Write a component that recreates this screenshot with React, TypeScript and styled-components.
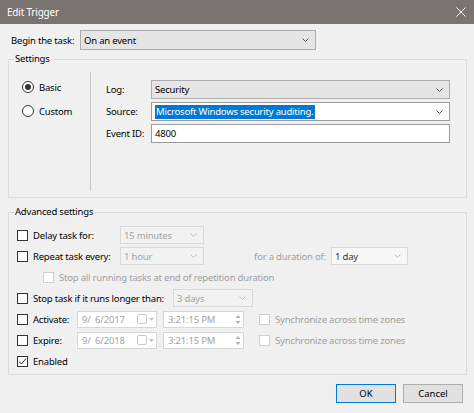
import React from "react";
import styled, { createGlobalStyle } from "styled-components";

const Global = createGlobalStyle`
  html, body { margin: 0; padding: 0; background: #f0f0f0; }
  body { font-family: "Noto Sans", "Liberation Sans", sans-serif; font-size: 9.5px; letter-spacing: -0.2px; color: #000; }
  * { box-sizing: border-box; }
`;

const Window = styled.div`
  width: 474px;
  height: 413px;
  background: #f0f0f0;
  display: flex;
  flex-direction: column;
  overflow: hidden;
`;

const TitleBar = styled.div`
  height: 24px;
  flex: none;
  background: #797371;
  color: #fff;
  display: flex;
  align-items: center;
  justify-content: space-between;
  padding: 0 8px 0 7px;
  font-size: 10px;
`;

const Content = styled.div`
  padding: 6px 8px 0 8px;
  display: flex;
  flex-direction: column;
`;

const Row = styled.div<{ $h?: number }>`
  display: flex;
  align-items: center;
  height: ${(p) => p.$h ?? 18}px;
`;

const FieldLabel = styled.span<{ $w: number; $pl?: number }>`
  width: ${(p) => p.$w}px;
  padding-left: ${(p) => p.$pl ?? 0}px;
  flex: none;
  white-space: nowrap;
`;

type ComboKind = "readonly" | "edit" | "disabled" | "soft";

const ComboBox = styled.div<{ $kind: ComboKind; $w?: number; $h?: number }>`
  position: relative;
  display: flex;
  align-items: center;
  justify-content: space-between;
  height: ${(p) => p.$h ?? 18}px;
  width: ${(p) => (p.$w ? `${p.$w}px` : "auto")};
  flex: ${(p) => (p.$w ? "none" : "1")};
  padding: 0 6px 0 3px;
  white-space: nowrap;
  border: 1px solid
    ${(p) =>
      p.$kind === "readonly" ? "#adadad" : p.$kind === "edit" ? "#9b9b9b" : "#d9d9d9"};
  background: ${(p) =>
    p.$kind === "readonly" ? "#e5e5e5" : p.$kind === "edit" ? "#fff" : p.$kind === "soft" ? "#f7f7f7" : "#f2f2f2"};
  color: ${(p) => (p.$kind === "disabled" ? "#a2a2a2" : p.$kind === "soft" ? "#333" : "#000")};
`;

const Selected = styled.span`
  background: #0078d7;
  color: #fff;
  padding: 0 1px;
  line-height: 14px;
`;

const GroupBox = styled.div<{ $mt: number }>`
  position: relative;
  width: 459px;
  margin-top: ${(p) => p.$mt}px;
  border: 1px solid #dcdcdc;
`;

const GroupTitle = styled.span`
  position: absolute;
  top: -8px;
  left: 5px;
  padding: 0 1px;
  background: #f0f0f0;
  line-height: 14px;
`;

const SettingsInner = styled.div`
  display: grid;
  grid-template-columns: 82px 1fr;
  padding: 12px 0 6px 0;
`;

const ModeColumn = styled.div`
  border-right: 1px solid #c6c6c6;
  height: 119px;
  display: flex;
  flex-direction: column;
  gap: 10px;
  padding: 8px 0 0 13px;
`;

const RadioRow = styled.label`
  display: flex;
  align-items: center;
  gap: 5px;
  height: 14px;
`;

const RadioDot = styled.span<{ $on?: boolean }>`
  width: 12px;
  height: 12px;
  border-radius: 50%;
  border: 1px solid #333;
  background: #fff;
  display: flex;
  align-items: center;
  justify-content: center;
  &::after {
    content: "";
    width: 6px;
    height: 6px;
    border-radius: 50%;
    background: ${(p) => (p.$on ? "#333" : "transparent")};
  }
`;

const FieldColumn = styled.div`
  display: flex;
  flex-direction: column;
  gap: 3px;
  padding: 8px 16px 0 15px;
`;

const AdvancedInner = styled.div`
  display: flex;
  flex-direction: column;
  gap: 3px;
  padding: 13px 0 4px 8px;
`;

const CheckLabel = styled.label<{ $w?: number; $disabled?: boolean; $pl?: number }>`
  display: flex;
  align-items: center;
  gap: 5px;
  width: ${(p) => (p.$w ? `${p.$w}px` : "auto")};
  padding-left: ${(p) => p.$pl ?? 0}px;
  flex: none;
  white-space: nowrap;
  color: ${(p) => (p.$disabled ? "#a0a0a0" : "#000")};
`;

const Box = styled.span<{ $disabled?: boolean }>`
  width: 11px;
  height: 11px;
  flex: none;
  border: 1px solid ${(p) => (p.$disabled ? "#cfcfcf" : "#333")};
  background: #fff;
  display: flex;
  align-items: center;
  justify-content: center;
`;

const DurationLabel = styled.span`
  width: 127px;
  padding-right: 5px;
  text-align: right;
  color: #a0a0a0;
  white-space: nowrap;
`;

const PickerBox = styled.div<{ $w: number; $mr?: number }>`
  width: ${(p) => p.$w}px;
  height: 17px;
  margin-right: ${(p) => p.$mr ?? 0}px;
  flex: none;
  display: flex;
  align-items: center;
  justify-content: space-between;
  padding: 0 2px 0 4px;
  border: 1px solid #d6d6d6;
  background: #fff;
  color: #a2a2a2;
  white-space: pre;
`;

const PickerIcons = styled.span`
  display: flex;
  align-items: center;
  gap: 2px;
`;

const ButtonRow = styled.div`
  display: flex;
  justify-content: flex-end;
  gap: 7px;
  margin-top: 9px;
  padding-right: 3px;
`;

const Button = styled.button<{ $default?: boolean }>`
  width: 60px;
  height: 19px;
  padding: 0;
  font: inherit;
  color: #000;
  background: #e1e1e1;
  border: 1px solid ${(p) => (p.$default ? "#0078d7" : "#adadad")};
`;

const Chevron = ({ color = "#555" }: { color?: string }) => (
  <svg width="7" height="4" viewBox="0 0 7 4">
    <polyline points="0.5,0.5 3.5,3.5 6.5,0.5" fill="none" stroke={color} strokeWidth="1" />
  </svg>
);

const CloseIcon = () => (
  <svg width="10" height="10" viewBox="0 0 10 10">
    <path d="M0.5 0.5 L9.5 9.5 M9.5 0.5 L0.5 9.5" stroke="#fff" strokeWidth="1" />
  </svg>
);

const Check = () => (
  <svg width="9" height="9" viewBox="0 0 9 9">
    <polyline points="1,4.5 3.5,7 8,1.5" fill="none" stroke="#222" strokeWidth="1" />
  </svg>
);

const CalendarIcon = () => (
  <PickerIcons>
    <svg width="10" height="10" viewBox="0 0 10 10">
      <rect x="0.5" y="0.5" width="9" height="9" rx="1.5" fill="none" stroke="#c8c8c8" />
    </svg>
    <svg width="5" height="3" viewBox="0 0 5 3">
      <polygon points="0,0 5,0 2.5,3" fill="#c0c0c0" />
    </svg>
  </PickerIcons>
);

const SpinIcon = () => (
  <svg width="6" height="13" viewBox="0 0 6 13">
    <polygon points="3,2 5.5,5 0.5,5" fill="#b0b0b0" />
    <polygon points="0.5,8 5.5,8 3,11" fill="#b0b0b0" />
  </svg>
);

type CheckProps = { label: string; w?: number; checked?: boolean; disabled?: boolean; pl?: number };
const CheckItem = ({ label, w, checked, disabled, pl }: CheckProps) => (
  <CheckLabel $w={w} $disabled={disabled} $pl={pl}>
    <Box $disabled={disabled}>{checked && <Check />}</Box>
    <span>{label}</span>
  </CheckLabel>
);

const DateTimeRow = ({ label, date }: { label: string; date: string }) => (
  <Row>
    <CheckItem label={label} w={60} />
    <PickerBox $w={80} $mr={6}>
      <span>{date}</span>
      <CalendarIcon />
    </PickerBox>
    <PickerBox $w={81} $mr={15}>
      <span>3:21:15 PM</span>
      <SpinIcon />
    </PickerBox>
    <CheckItem label="Synchronize across time zones" disabled />
  </Row>
);

export default function App() {
  return (
    <Window>
      <Global />
      <TitleBar>
        <span>Edit Trigger</span>
        <CloseIcon />
      </TitleBar>
      <Content>
        <Row $h={20}>
          <FieldLabel $w={72} $pl={3}>Begin the task:</FieldLabel>
          <ComboBox $kind="readonly" $w={236} $h={20}>
            <span>On an event</span>
            <Chevron />
          </ComboBox>
        </Row>

        <GroupBox $mt={9}>
          <GroupTitle>Settings</GroupTitle>
          <SettingsInner>
            <ModeColumn>
              <RadioRow>
                <RadioDot $on />
                <span>Basic</span>
              </RadioRow>
              <RadioRow>
                <RadioDot />
                <span>Custom</span>
              </RadioRow>
            </ModeColumn>
            <FieldColumn>
              <Row $h={19}>
                <FieldLabel $w={45}>Log:</FieldLabel>
                <ComboBox $kind="readonly" $h={19}>
                  <span>Security</span>
                  <Chevron />
                </ComboBox>
              </Row>
              <Row $h={19}>
                <FieldLabel $w={45}>Source:</FieldLabel>
                <ComboBox $kind="edit" $h={19}>
                  <Selected>Microsoft Windows security auditing.</Selected>
                  <Chevron />
                </ComboBox>
              </Row>
              <Row $h={19}>
                <FieldLabel $w={45}>Event ID:</FieldLabel>
                <ComboBox $kind="edit" $h={19}>
                  <span>4800</span>
                </ComboBox>
              </Row>
            </FieldColumn>
          </SettingsInner>
        </GroupBox>

        <GroupBox $mt={14}>
          <GroupTitle>Advanced settings</GroupTitle>
          <AdvancedInner>
            <Row>
              <CheckItem label="Delay task for:" w={103} />
              <ComboBox $kind="disabled" $w={84}>
                <span>15 minutes</span>
                <Chevron color="#bdbdbd" />
              </ComboBox>
            </Row>
            <Row>
              <CheckItem label="Repeat task every:" w={103} />
              <ComboBox $kind="disabled" $w={84}>
                <span>1 hour</span>
                <Chevron color="#bdbdbd" />
              </ComboBox>
              <DurationLabel>for a duration of:</DurationLabel>
              <ComboBox $kind="soft" $w={77}>
                <span>1 day</span>
                <Chevron color="#bdbdbd" />
              </ComboBox>
            </Row>
            <Row>
              <CheckItem label="Stop all running tasks at end of repetition duration" disabled pl={26} />
            </Row>
            <Row>
              <CheckItem label="Stop task if it runs longer than:" w={156} />
              <ComboBox $kind="disabled" $w={80}>
                <span>3 days</span>
                <Chevron color="#bdbdbd" />
              </ComboBox>
            </Row>
            <DateTimeRow label="Activate:" date="9/  6/2017" />
            <DateTimeRow label="Expire:" date="9/  6/2018" />
            <Row>
              <CheckItem label="Enabled" checked />
            </Row>
          </AdvancedInner>
        </GroupBox>

        <ButtonRow>
          <Button $default>OK</Button>
          <Button>Cancel</Button>
        </ButtonRow>
      </Content>
    </Window>
  );
}
